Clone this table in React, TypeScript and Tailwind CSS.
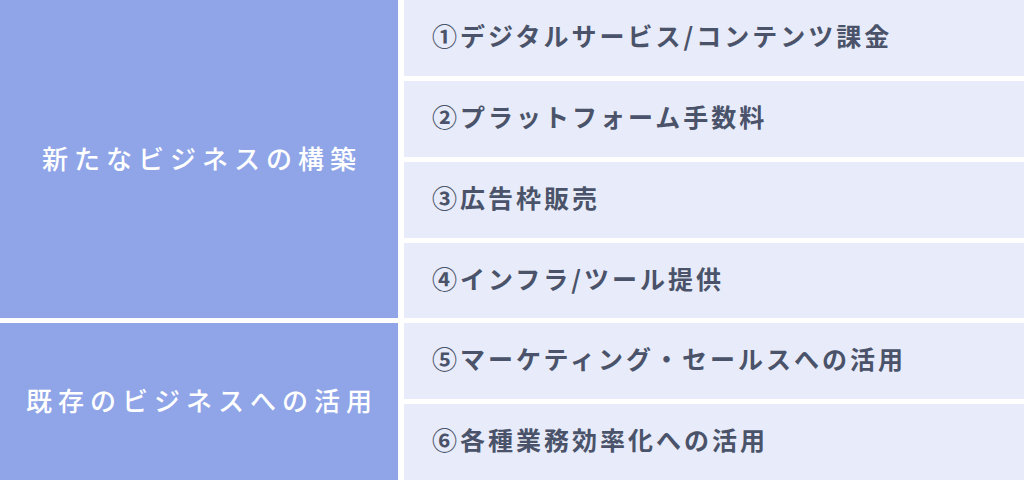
const groups = [
  {
    label: "新たなビジネスの構築",
    rows: "row-span-4",
    items: ["①デジタルサービス/コンテンツ課金", "②プラットフォーム手数料", "③広告枠販売", "④インフラ/ツール提供"],
  },
  {
    label: "既存のビジネスへの活用",
    rows: "row-span-2",
    items: ["⑤マーケティング・セールスへの活用", "⑥各種業務効率化への活用"],
  },
];

const App = () => (
  <div
    className="w-[1024px] h-[480px] bg-white grid grid-cols-[398px_1fr] grid-rows-6 gap-x-[6px] gap-y-[5px]"
    style={{ fontFamily: '"Noto Sans CJK JP", "Noto Sans", sans-serif' }}
  >
    {groups.map((g) => (
      <>
        <div
          key={g.label}
          className={`${g.rows} bg-[#8fa5e8] flex items-center justify-center pb-[4px] text-white text-[26px] font-medium tracking-[6px] pl-[6px]`}
        >
          {g.label}
        </div>
        {g.items.map((t) => (
          <div
            key={t}
            className="col-start-2 bg-[#e8ebf9] flex items-center pl-[28px] pb-[4px] text-[#4a5369] text-[25px] font-bold tracking-[3px]"
          >
            {t}
          </div>
        ))}
      </>
    ))}
  </div>
);

export default App;
